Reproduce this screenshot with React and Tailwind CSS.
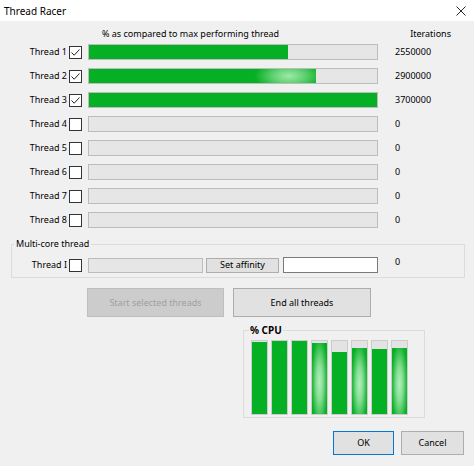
import React from "react";

const threads = [
  { name: "Thread 1", checked: true, fill: 199, glow: false, iter: "2550000" },
  { name: "Thread 2", checked: true, fill: 227, glow: true, iter: "2900000" },
  { name: "Thread 3", checked: true, fill: 288, glow: false, iter: "3700000" },
  { name: "Thread 4", checked: false, fill: 0, glow: false, iter: "0" },
  { name: "Thread 5", checked: false, fill: 0, glow: false, iter: "0" },
  { name: "Thread 6", checked: false, fill: 0, glow: false, iter: "0" },
  { name: "Thread 7", checked: false, fill: 0, glow: false, iter: "0" },
  { name: "Thread 8", checked: false, fill: 0, glow: false, iter: "0" },
];

const cpu = [
  { h: 72, glow: false },
  { h: 73, glow: false },
  { h: 73, glow: false },
  { h: 71, glow: true },
  { h: 62, glow: false },
  { h: 66, glow: true },
  { h: 65, glow: false },
  { h: 66, glow: true },
];

function Checkbox({ checked, className = "" }) {
  return (
    <div
      className={
        "w-[13px] h-[13px] border border-[#333333] bg-white flex items-center justify-center shrink-0 " +
        className
      }
    >
      {checked && (
        <svg width="11" height="11" viewBox="0 0 11 11">
          <polyline
            points="1.5,5.5 4.2,8.2 9.5,2.5"
            fill="none"
            stroke="#222"
            strokeWidth="1"
          />
        </svg>
      )}
    </div>
  );
}

export default function App() {
  return (
    <div className="w-[474px] h-[466px] overflow-hidden bg-[#f0f0f0] text-black text-[9px] leading-[12px] font-['Noto_Sans',sans-serif] flex flex-col">
      {/* Title bar */}
      <div className="h-[21px] bg-white flex items-center justify-between pl-[4px] pr-[8px] shrink-0">
        <span className="text-[10px] leading-[12px]">Thread Racer</span>
        <svg width="10" height="10" viewBox="0 0 10 10">
          <line x1="0.5" y1="0.5" x2="9.5" y2="9.5" stroke="#111" strokeWidth="0.9" />
          <line x1="9.5" y1="0.5" x2="0.5" y2="9.5" stroke="#111" strokeWidth="0.9" />
        </svg>
      </div>

      {/* Header */}
      <div className="flex pt-[7px] h-[19px] shrink-0">
        <span className="ml-[102px]">% as compared to max performing thread</span>
        <span className="ml-[131px]">Iterations</span>
      </div>

      {/* Thread rows */}
      {threads.map((t) => (
        <div key={t.name} className="flex h-[24px] items-center shrink-0">
          <span className="w-[67px] text-right">{t.name}</span>
          <Checkbox checked={t.checked} className="ml-[2px]" />
          <div className="ml-[6px] w-[290px] h-[16px] border border-[#bcbcbc] bg-[#e6e6e6] flex">
            {t.fill > 0 && (
              <div
                className={
                  t.glow
                    ? "h-full bg-[#06b025] bg-[radial-gradient(ellipse_15%_110%_at_88%_50%,#9fe9aa_0%,#63d274_45%,#06b025_100%)]"
                    : "h-full bg-[#06b025]"
                }
                style={{ width: t.fill }}
              />
            )}
          </div>
          <span className="ml-[17px]">{t.iter}</span>
        </div>
      ))}

      {/* Multi-core group */}
      <fieldset className="ml-[11px] mt-[6px] w-[454px] border border-[#dcdcdc] shrink-0">
        <legend className="ml-[2px] px-[2px]">Multi-core thread</legend>
        <div className="flex items-center pt-[7px] pb-[4px]">
          <div className="flex items-center h-[16px]">
            <span className="w-[55px] text-right">Thread I</span>
            <Checkbox checked={false} className="ml-[2px]" />
            <div className="ml-[6px] w-[115px] h-[15px] border border-[#bcbcbc] bg-[#e6e6e6]" />
            <div className="ml-[3px] w-[73px] h-[15px] border border-[#adadad] bg-[#e1e1e1] flex items-center justify-center">
              Set affinity
            </div>
            <div className="ml-[4px] w-[95px] h-[16px] border border-[#7a7a7a] bg-white" />
            <span className="ml-[17px] -mt-[6px]">0</span>
          </div>
        </div>
      </fieldset>

      {/* Action buttons */}
      <div className="flex mt-[10px] shrink-0">
        <div className="ml-[87px] w-[137px] h-[29px] border border-[#bfbfbf] bg-[#cccccc] text-[#a0a0a0] flex items-center justify-center">
          Start selected threads
        </div>
        <div className="ml-[9px] w-[138px] h-[29px] border border-[#adadad] bg-[#e1e1e1] flex items-center justify-center">
          End all threads
        </div>
      </div>

      {/* CPU panel */}
      <fieldset className="ml-[243px] mt-[7px] w-[182px] border border-[#dcdcdc] shrink-0">
        <legend className="ml-[5px] px-[1px] text-[10px] font-bold leading-[12px]">% CPU</legend>
        <div className="flex gap-[3px] pl-[7px] pt-[4px] pb-[2px]">
          {cpu.map((b, i) => (
            <div
              key={i}
              className="w-[17px] h-[75px] border border-[#cccccc] bg-[#e3e3e3] flex flex-col justify-end"
            >
              <div
                className={
                  b.glow
                    ? "w-full bg-[#06b025] bg-[radial-gradient(ellipse_55%_65%_at_50%_55%,#b4eebc_0%,#86de94_40%,#2fbd48_80%,#06b025_100%)]"
                    : "w-full bg-[#06b025]"
                }
                style={{ height: b.h }}
              />
            </div>
          ))}
        </div>
      </fieldset>

      {/* OK / Cancel */}
      <div className="flex justify-end gap-[7px] pr-[10px] mt-[13px] shrink-0">
        <div className="w-[61px] h-[24px] border border-[#0078d7] bg-[#e1e1e1] flex items-center justify-center">
          OK
        </div>
        <div className="w-[63px] h-[24px] border border-[#adadad] bg-[#e1e1e1] flex items-center justify-center">
          Cancel
        </div>
      </div>
    </div>
  );
}
